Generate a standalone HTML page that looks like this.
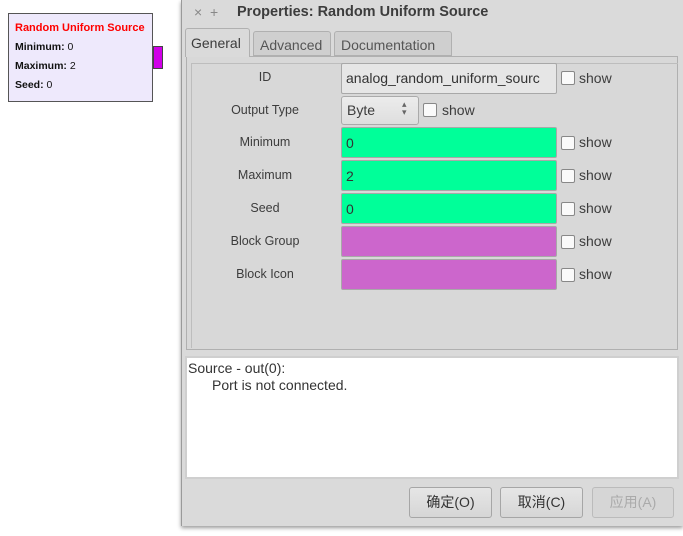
<!DOCTYPE html>
<html><head><meta charset="utf-8"><style>
*{box-sizing:border-box;margin:0;padding:0}
body{width:683px;height:536px;background:#fff;position:relative;overflow:hidden;font-family:"Liberation Sans","Noto Sans CJK SC",sans-serif;color:#3c3c3c}
.a{position:absolute}
.blk{left:8px;top:13px;width:145px;height:89px;background:#eee9fc;border:1px solid #555;font-size:10.5px;font-weight:bold;color:#111}
.dlg{left:181px;top:0;width:502px;height:526px;background:#dadada;border-left:1px solid #9a9a9a;box-shadow:0 2px 4px rgba(0,0,0,.4)}
.lbl{font-size:12.5px;color:#3c3c3c;width:150px;text-align:center;left:190px}
.fld{left:341px;width:216px;border:1px solid #a8a8a8;border-radius:2px;font-size:14px;padding-left:4px;color:#333}
.cb{left:561px;width:14px;height:14px;border:1px solid #888;border-radius:2px;background:#fafafa}
.sh{left:579px;font-size:14px;color:#3c3c3c}
.btn{top:487px;height:31px;border:1px solid #a6a6a6;border-radius:3px;background:linear-gradient(#e6e6e6,#d6d6d6);font-size:14px;text-align:center;line-height:29px;color:#333}
</style></head><body>
<div class="a blk">
<div class="a" style="left:6px;top:8px;color:#f00;font-size:11px">Random Uniform Source</div>
<div class="a" style="left:6px;top:27px">Minimum: <span style="font-weight:normal">0</span></div>
<div class="a" style="left:6px;top:46px">Maximum: <span style="font-weight:normal">2</span></div>
<div class="a" style="left:6px;top:65px">Seed: <span style="font-weight:normal">0</span></div>
</div>
<div class="a" style="left:153px;top:46px;width:10px;height:23px;background:#d000e8;border:1px solid #444"></div>

<div class="a dlg"></div>
<div class="a" style="left:194px;top:4px;font-size:14px;color:#888">× &nbsp;+</div>
<div class="a" style="left:237px;top:4px;font-size:14.5px;font-weight:bold;color:#3c3c3c">Properties: Random Uniform Source</div>
<!-- tabs -->
<div class="a" style="left:186px;top:56px;width:492px;height:294px;border:1px solid #b0b0b0;background:#d8d8d8"></div>
<div class="a" style="left:191px;top:63px;width:487px;height:285px;border:1px solid #bdbdbd;border-right:none;border-bottom:none"></div>
<div class="a" style="left:185px;top:28px;width:65px;height:29px;background:#dadada;border:1px solid #b0b0b0;border-bottom:none;border-radius:3px 3px 0 0;font-size:14px;padding:6px 0 0 5px">General</div>
<div class="a" style="left:253px;top:31px;width:78px;height:25px;background:#cfcfcf;border:1px solid #b0b0b0;border-radius:3px 3px 0 0;font-size:14px;padding:5px 0 0 6px;color:#555">Advanced</div>
<div class="a" style="left:334px;top:31px;width:118px;height:25px;background:#cfcfcf;border:1px solid #b0b0b0;border-radius:3px 3px 0 0;font-size:14px;padding:5px 0 0 6px;color:#555">Documentation</div>

<div class="a lbl" style="top:70px">ID</div>
<div class="a fld" style="top:63px;height:31px;background:#e6e6e6;line-height:29px">analog_random_uniform_sourc</div>
<div class="a cb" style="top:71px"></div><div class="a sh" style="top:70px">show</div>

<div class="a lbl" style="top:103px">Output Type</div>
<div class="a" style="left:341px;top:96px;width:78px;height:29px;border:1px solid #aaa;border-radius:3px;background:linear-gradient(#ececec,#dedede);font-size:14px;padding:5px 0 0 5px">Byte<span style="position:absolute;left:60px;top:3px;font-size:9px;line-height:8px;color:#666">▴<br>▾</span></div>
<div class="a cb" style="left:423px;top:103px"></div><div class="a sh" style="left:442px;top:102px">show</div>

<div class="a lbl" style="top:135px">Minimum</div>
<div class="a fld" style="top:127px;height:31px;background:#00ff99;line-height:31px">0</div>
<div class="a cb" style="top:136px"></div><div class="a sh" style="top:134px">show</div>

<div class="a lbl" style="top:168px">Maximum</div>
<div class="a fld" style="top:160px;height:31px;background:#00ff99;line-height:31px">2</div>
<div class="a cb" style="top:169px"></div><div class="a sh" style="top:167px">show</div>

<div class="a lbl" style="top:201px">Seed</div>
<div class="a fld" style="top:193px;height:31px;background:#00ff99;line-height:31px">0</div>
<div class="a cb" style="top:202px"></div><div class="a sh" style="top:200px">show</div>

<div class="a lbl" style="top:234px">Block Group</div>
<div class="a fld" style="top:226px;height:31px;background:#cc66cc"></div>
<div class="a cb" style="top:235px"></div><div class="a sh" style="top:233px">show</div>

<div class="a lbl" style="top:267px">Block Icon</div>
<div class="a fld" style="top:259px;height:31px;background:#cc66cc"></div>
<div class="a cb" style="top:268px"></div><div class="a sh" style="top:266px">show</div>

<div class="a" style="left:185px;top:356px;width:494px;height:123px;background:#fff;border:2px solid #cfcfcf;font-size:14px;color:#333;padding:2px 0 0 1px;line-height:17px">Source - out(0):<br><span style="padding-left:24px">Port is not connected.</span></div>

<div class="a btn" style="left:409px;width:83px">确定(O)</div>
<div class="a btn" style="left:500px;width:83px">取消(C)</div>
<div class="a btn" style="left:592px;width:82px;color:#aaa;background:#d6d6d6;border-color:#bbb">应用(A)</div>
</body></html>
